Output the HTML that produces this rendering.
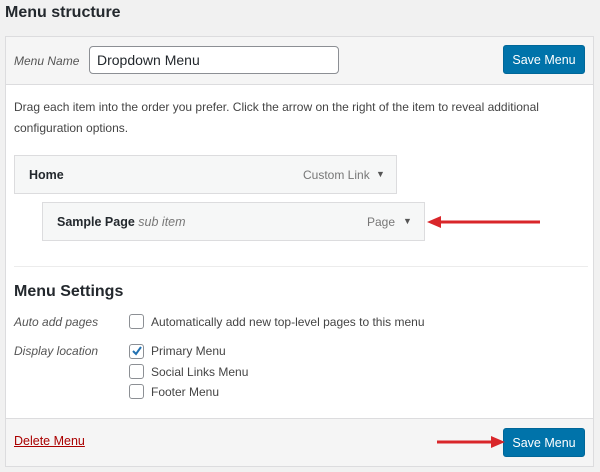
<!DOCTYPE html>
<html><head><style>
body{margin:0;width:600px;height:472px;background:#f1f1f1;font-family:"Liberation Sans",sans-serif;color:#23282d;position:relative;overflow:hidden}
.a{position:absolute}
.btn{background:#0073aa;color:#fff;font-size:12.5px;border-radius:3px;text-align:center;line-height:29px;width:82px;height:29px;border:1px solid #006799;box-sizing:border-box}
.cb{width:15px;height:15px;border:1px solid #8c8f94;border-radius:3px;background:#fff;box-sizing:border-box}
.t{font-size:12px;color:#444}
.i{font-style:italic;font-size:12px;color:#555}
</style></head><body>
<div class="a" style="left:5px;top:4px;font-size:16px;font-weight:bold">Menu structure</div>
<div class="a" style="left:5px;top:36px;width:589px;height:431px;border:1px solid #dcdcde;background:#fff;box-sizing:border-box"></div>
<div class="a" style="left:6px;top:37px;width:587px;height:47px;background:#f5f5f5;border-bottom:1px solid #dcdcde"></div>
<div class="a i" style="left:14px;top:54px">Menu Name</div>
<div class="a" style="left:89px;top:46px;width:250px;height:28px;border:1px solid #8c8f94;border-radius:4px;background:#fff;box-sizing:border-box;font-size:14px;line-height:26px;padding-left:7px">Dropdown Menu</div>
<div class="a btn" style="left:503px;top:45px">Save Menu</div>
<div class="a t" style="left:14px;top:97px;line-height:21px;width:550px">Drag each item into the order you prefer. Click the arrow on the right of the item to reveal additional configuration options.</div>
<div class="a" style="left:14px;top:155px;width:383px;height:39px;border:1px solid #dcdcde;background:#f6f7f7;box-sizing:border-box"></div>
<div class="a" style="left:29px;top:168px;font-size:12.5px;font-weight:bold">Home</div>
<div class="a" style="left:303px;top:168px;font-size:12px;color:#777">Custom Link</div>
<div class="a" style="left:376px;top:169px;font-size:9px;color:#555">▼</div>
<div class="a" style="left:42px;top:202px;width:383px;height:39px;border:1px solid #dcdcde;background:#f6f7f7;box-sizing:border-box"></div>
<div class="a" style="left:57px;top:215px;font-size:12.5px;font-weight:bold">Sample Page <span style="font-weight:normal;font-style:italic;color:#777">sub item</span></div>
<div class="a" style="left:367px;top:215px;font-size:12px;color:#777">Page</div>
<div class="a" style="left:403px;top:216px;font-size:9px;color:#555">▼</div>
<svg class="a" style="left:425px;top:214px" width="120" height="16"><path d="M14 8H115" stroke="#d9262a" stroke-width="3"/><path d="M2 8L16 2V14Z" fill="#d9262a"/></svg>
<div class="a" style="left:14px;top:266px;width:574px;height:1px;background:#ececec"></div>
<div class="a" style="left:14px;top:283px;font-size:16px;font-weight:bold">Menu Settings</div>
<div class="a i" style="left:14px;top:315px">Auto add pages</div>
<div class="a i" style="left:14px;top:344px">Display location</div>
<div class="a cb" style="left:129px;top:314px"></div><div class="a t" style="left:151px;top:315px">Automatically add new top-level pages to this menu</div>
<div class="a cb" style="left:129px;top:344px"></div><svg class="a" style="left:130px;top:344px" width="14" height="14"><path d="M3 7L6 10L11 3" stroke="#2271b1" stroke-width="2" fill="none"/></svg><div class="a t" style="left:151px;top:344px">Primary Menu</div>
<div class="a cb" style="left:129px;top:364px"></div><div class="a t" style="left:151px;top:365px">Social Links Menu</div>
<div class="a cb" style="left:129px;top:384px"></div><div class="a t" style="left:151px;top:385px">Footer Menu</div>
<div class="a" style="left:6px;top:418px;width:587px;height:47px;background:#f5f5f5;border-top:1px solid #dcdcde"></div>
<div class="a" style="left:14px;top:434px;font-size:12.5px;color:#a00;text-decoration:underline">Delete Menu</div>
<div class="a btn" style="left:503px;top:428px">Save Menu</div>
<svg class="a" style="left:435px;top:435px" width="72" height="14"><path d="M2 7H58" stroke="#d9262a" stroke-width="3"/><path d="M70 7L56 1V13Z" fill="#d9262a"/></svg>
</body></html>
